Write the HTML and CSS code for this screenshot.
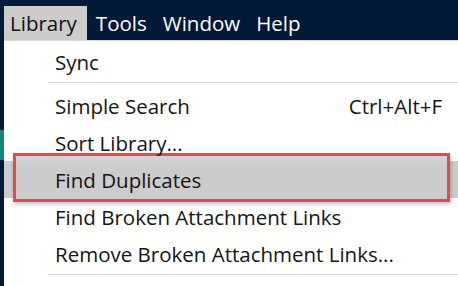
FILE: index.html
```html
<!DOCTYPE html>
<html>
<head>
<meta charset="utf-8">
<link rel="stylesheet" href="styles.css">
</head>
<body>
<div class="menubar">
  <div class="mb-item active">Library</div>
  <div class="mb-item">Tools</div>
  <div class="mb-item">Window</div>
  <div class="mb-item">Help</div>
</div>
<div class="below">
  <div class="strip"><div class="teal"></div></div>
  <div class="panel">
    <div class="item"><span class="label">Sync</span></div>
    <div class="sep"></div>
    <div class="item"><span class="label">Simple Search</span><span class="key">Ctrl+Alt+F</span></div>
    <div class="item"><span class="label">Sort Library...</span></div>
    <div class="item hl"><span class="label">Find Duplicates</span></div>
    <div class="item"><span class="label">Find Broken Attachment Links</span></div>
    <div class="item"><span class="label">Remove Broken Attachment Links...</span></div>
    <div class="sep"></div>
  </div>
</div>
</body>
</html>
```
FILE: styles.css
```css
html, body {
  margin: 0;
  padding: 0;
  width: 458px;
  height: 286px;
  overflow: hidden;
  background: #fff;
  font-family: "Open Sans", "Noto Sans", sans-serif;
}
.menubar {
  height: 40px;
  box-sizing: border-box;
  padding: 6px 0 0 4px;
  background: #011a37;
  display: flex;
}
.mb-item {
  height: 34px;
  line-height: 34px;
  padding: 0 7px 0 9px;
  font-size: 20.5px;
  color: #fff;
}
.mb-item.active {
  padding: 0 10px 0 6px;
  background: #cccccc;
  color: #111;
}
.below {
  display: flex;
  height: 246px;
}
.strip {
  width: 4px;
  background: #011a37;
  flex: none;
}
.teal {
  margin-top: 90px;
  height: 30px;
  background: #12877a;
}
.panel {
  flex: 1;
  background: #fff;
  border-top: 1px solid #d9d9d9;
  padding-top: 2px;
}
.item {
  position: relative;
  height: 37px;
  display: flex;
  align-items: center;
  padding: 0 16px 0 51px;
  font-size: 20.5px;
  color: #141414;
}
.label {
  position: relative;
  z-index: 1;
  flex: 1;
}
.key {
  position: relative;
  z-index: 1;
}
.item.hl {
  background: #cccccc;
}
.item.hl::before {
  content: "";
  position: absolute;
  left: 9px;
  right: 8px;
  top: -8px;
  bottom: -4px;
  border: 3px solid #e24a4d;
  background: linear-gradient(#d3d3d3, #cccccc 30%);
  box-shadow: 1px 2px 4px rgba(0, 0, 0, 0.25);
}
.sep {
  height: 1px;
  background: #d6d6d6;
  margin: 2px 0 4px 44px;
}
```
